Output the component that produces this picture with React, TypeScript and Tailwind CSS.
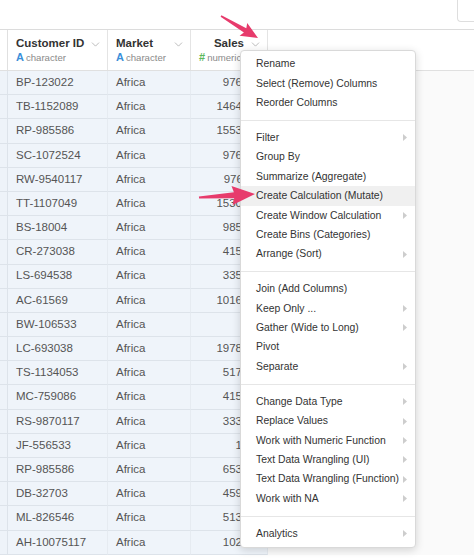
import { ChevronDown } from "lucide-react";

type Row = { id: string; market: string; sales: string };

const rows: Row[] = [
  { id: "BP-123022", market: "Africa", sales: "976.08" },
  { id: "TB-1152089", market: "Africa", sales: "14644.2" },
  { id: "RP-985586", market: "Africa", sales: "15533.7" },
  { id: "SC-1072524", market: "Africa", sales: "976.08" },
  { id: "RW-9540117", market: "Africa", sales: "976.11" },
  { id: "TT-1107049", market: "Africa", sales: "15306.4" },
  { id: "BS-18004", market: "Africa", sales: "985.52" },
  { id: "CR-273038", market: "Africa", sales: "415.76" },
  { id: "LS-694538", market: "Africa", sales: "335.91" },
  { id: "AC-61569", market: "Africa", sales: "10162.3" },
  { id: "BW-106533", market: "Africa", sales: "" },
  { id: "LC-693038", market: "Africa", sales: "19782.5" },
  { id: "TS-1134053", market: "Africa", sales: "517.13" },
  { id: "MC-759086", market: "Africa", sales: "415.76" },
  { id: "RS-9870117", market: "Africa", sales: "333.24" },
  { id: "JF-556533", market: "Africa", sales: "1.85" },
  { id: "RP-985586", market: "Africa", sales: "653.92" },
  { id: "DB-32703", market: "Africa", sales: "459.37" },
  { id: "ML-826546", market: "Africa", sales: "513.66" },
  { id: "AH-10075117", market: "Africa", sales: "102.51" },
];

type MenuItem = { label: string; sub?: boolean; active?: boolean };

const menuGroups: MenuItem[][] = [
  [{ label: "Rename" }, { label: "Select (Remove) Columns" }, { label: "Reorder Columns" }],
  [
    { label: "Filter", sub: true },
    { label: "Group By" },
    { label: "Summarize (Aggregate)" },
    { label: "Create Calculation (Mutate)", active: true },
    { label: "Create Window Calculation", sub: true },
    { label: "Create Bins (Categories)" },
    { label: "Arrange (Sort)", sub: true },
  ],
  [
    { label: "Join (Add Columns)" },
    { label: "Keep Only ...", sub: true },
    { label: "Gather (Wide to Long)", sub: true },
    { label: "Pivot" },
    { label: "Separate", sub: true },
  ],
  [
    { label: "Change Data Type", sub: true },
    { label: "Replace Values", sub: true },
    { label: "Work with Numeric Function", sub: true },
    { label: "Text Data Wrangling (UI)", sub: true },
    { label: "Text Data Wrangling (Function)", sub: true },
    { label: "Work with NA", sub: true },
  ],
  [{ label: "Analytics", sub: true }],
];

function arrowPoints(
  x1: number,
  y1: number,
  x2: number,
  y2: number,
  headLen: number,
  headHalf: number,
  tailHalf: number,
  neckHalf: number
) {
  const dx = x2 - x1;
  const dy = y2 - y1;
  const len = Math.hypot(dx, dy);
  const ux = dx / len;
  const uy = dy / len;
  const nx = -uy;
  const ny = ux;
  const bx = x2 - ux * headLen;
  const by = y2 - uy * headLen;
  const pts = [
    [x1 + nx * tailHalf, y1 + ny * tailHalf],
    [bx + nx * neckHalf, by + ny * neckHalf],
    [bx - ux * 2 + nx * headHalf, by - uy * 2 + ny * headHalf],
    [x2, y2],
    [bx - ux * 2 - nx * headHalf, by - uy * 2 - ny * headHalf],
    [bx - nx * neckHalf, by - ny * neckHalf],
    [x1 - nx * tailHalf, y1 - ny * tailHalf],
  ];
  return pts.map((p) => `${p[0].toFixed(1)},${p[1].toFixed(1)}`).join(" ");
}

function HeaderCell({
  title,
  type,
  numeric,
}: {
  title: string;
  type: string;
  numeric?: boolean;
}) {
  return (
    <div className="h-[40px] border-r border-[#e4e4e4] bg-white pl-[8px] pr-[5px] pt-[7px] overflow-hidden">
      <div
        className={`flex items-center h-[14px] ${numeric ? "justify-end gap-[5px]" : "justify-between"}`}
      >
        <span className="text-[11.5px] font-bold text-[#333] leading-none whitespace-nowrap">{title}</span>
        <ChevronDown className="w-[13px] h-[13px] text-[#999] shrink-0" strokeWidth={1.2} />
      </div>
      <div className="flex items-baseline mt-[1px] h-[12px] whitespace-nowrap">
        <span
          className={`text-[11px] font-bold leading-none ${numeric ? "text-[#5cb85c]" : "text-[#3b8fd9]"}`}
        >
          {numeric ? "#" : "A"}
        </span>
        <span className="text-[9.6px] text-[#8a8a8a] leading-none ml-[2px]">{type}</span>
      </div>
    </div>
  );
}

function SubArrow() {
  return (
    <svg width="4" height="7" viewBox="0 0 4 7">
      <path d="M0 0 L4 3.5 L0 7 Z" fill="#cdcdcd" />
    </svg>
  );
}

export default function App() {
  return (
    <div className="relative w-[474px] h-[559px] overflow-hidden bg-white font-['Liberation_Sans',Arial,sans-serif]">
      {/* top strip */}
      <div className="h-[29px] flex justify-end items-start">
        <div className="w-[17px] h-[22px] border-l border-b border-[#dedede] rounded-bl-[4px]" />
      </div>

      {/* table */}
      <div className="border-t border-[#dcdcdc] grid grid-cols-[8px_100px_83px_77px_1fr]">
        {/* header */}
        <div className="h-[41px] border-r border-b border-[#e0e0e0] bg-white" />
        <div className="border-b border-[#e0e0e0]">
          <HeaderCell title="Customer ID" type="character" />
        </div>
        <div className="border-b border-[#e0e0e0]">
          <HeaderCell title="Market" type="character" />
        </div>
        <div className="border-b border-[#e0e0e0]">
          <HeaderCell title="Sales" type="numeric" numeric />
        </div>
        <div className="border-b border-[#e0e0e0] bg-white" />

        {/* body */}
        {rows.map((r, i) => (
          <div key={i} className="contents">
            <div className="h-[24.2px] bg-[#eef3f9] border-r border-b border-[#dde3ea]" />
            <div className="h-[24.2px] bg-[#eff4fa] border-r border-b border-[#dde3ea] border-r-[#e6ebf1] flex items-center pl-[8px] text-[11.5px] text-[#555] whitespace-nowrap">
              {r.id}
            </div>
            <div className="h-[24.2px] bg-[#eff4fa] border-r border-b border-[#dde3ea] border-r-[#e6ebf1] flex items-center pl-[8px] text-[11.5px] text-[#555] whitespace-nowrap">
              {r.market}
            </div>
            <div className="h-[24.2px] bg-[#eff4fa] border-r border-b border-[#dde3ea] border-r-[#e6ebf1] flex items-center justify-end pr-[9px] text-[11.5px] text-[#555] whitespace-nowrap">
              {r.sales}
            </div>
            <div className="h-[24.2px] bg-[#fafafa]" />
          </div>
        ))}
      </div>

      {/* dropdown menu */}
      <div className="absolute left-[240px] top-[50px] w-[176px] bg-white border border-[#d9d9d9] rounded-[4px] shadow-[0_2px_8px_rgba(0,0,0,0.16)] py-[3.3px]">
        {menuGroups.map((group, gi) => (
          <div key={gi}>
            {gi > 0 && <div className="h-px bg-[#e6e6e6] my-[7.3px]" />}
            {group.map((item) => (
              <div
                key={item.label}
                className={`h-[19.4px] flex items-center justify-between pl-[15px] pr-[8px] text-[10.4px] text-[#333] whitespace-nowrap ${item.active ? "bg-[#f0f0f0]" : ""}`}
              >
                <span>{item.label}</span>
                {item.sub && <SubArrow />}
              </div>
            ))}
          </div>
        ))}
      </div>

      {/* callout arrows */}
      <svg className="absolute inset-0 pointer-events-none" width="474" height="559" viewBox="0 0 474 559">
        <polygon points={arrowPoints(221, 16, 258, 38, 15, 7.5, 0.8, 2.4)} fill="#e73b6c" />
        <polygon points={arrowPoints(199, 197.5, 255, 194, 21, 9.5, 1, 3)} fill="#e73b6c" />
      </svg>
    </div>
  );
}
